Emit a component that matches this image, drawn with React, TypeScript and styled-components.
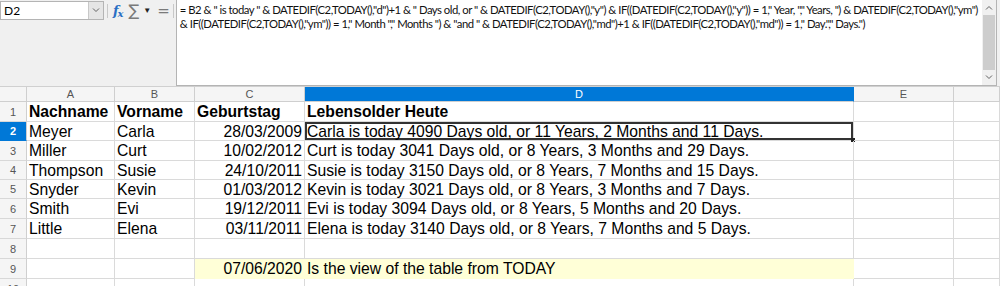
import styled, { createGlobalStyle } from "styled-components"

const GlobalStyle = createGlobalStyle`
  html, body {
    margin: 0;
    padding: 0;
    background: #ffffff;
  }
  body {
    font-family: "Liberation Sans", Arial, sans-serif;
  }
`

type Row = {
  num: number
  cells: string[]
  bold?: boolean
  highlight?: boolean
}

const rows: Row[] = [
  { num: 1, cells: ["Nachname", "Vorname", "Geburtstag", "Lebensolder Heute"], bold: true },
  { num: 2, cells: ["Meyer", "Carla", "28/03/2009", "Carla is today 4090 Days old, or 11 Years, 2 Months and 11 Days."] },
  { num: 3, cells: ["Miller", "Curt", "10/02/2012", "Curt is today 3041 Days old, or 8 Years, 3 Months and 29 Days."] },
  { num: 4, cells: ["Thompson", "Susie", "24/10/2011", "Susie is today 3150 Days old, or 8 Years, 7 Months and 15 Days."] },
  { num: 5, cells: ["Snyder", "Kevin", "01/03/2012", "Kevin is today 3021 Days old, or 8 Years, 3 Months and 7 Days."] },
  { num: 6, cells: ["Smith", "Evi", "19/12/2011", "Evi is today 3094 Days old, or 8 Years, 5 Months and 20 Days."] },
  { num: 7, cells: ["Little", "Elena", "03/11/2011", "Elena is today 3140 Days old, or 8 Years, 7 Months and 5 Days."] },
  { num: 8, cells: ["", "", "", ""] },
  { num: 9, cells: ["", "", "07/06/2020", "Is the view of the table from TODAY"], highlight: true },
  { num: 10, cells: ["", "", "", ""] },
]

const rowHeights = "15px 20px 19px 20px 19px 19px 20px 20px 20px 20px 20px"
const columns = ["A", "B", "C", "D", "E", ""]

const formulaLines = [
  '= B2 & " is today " & DATEDIF(C2,TODAY(),"d")+1 & " Days old, or " & DATEDIF(C2,TODAY(),"y") & IF((DATEDIF(C2,TODAY(),"y")) = 1," Year, "," Years, ") & DATEDIF(C2,TODAY(),"ym")',
  '& IF((DATEDIF(C2,TODAY(),"ym")) = 1," Month "," Months ") & "and " & DATEDIF(C2,TODAY(),"md")+1 & IF((DATEDIF(C2,TODAY(),"md")) = 1," Day."," Days.")',
]

const Page = styled.div`
  width: 1000px;
  height: 286px;
  overflow: hidden;
  background: #ffffff;
`

const FormulaBar = styled.div`
  display: flex;
  align-items: flex-start;
  height: 86px;
  background: #f0f0f0;
  border-bottom: 1px solid #d0d0d0;
`

const NameBox = styled.div`
  flex: 0 0 104px;
  display: flex;
  margin-top: 1px;
  height: 19px;
  border: 1px solid #b4b4b4;
  box-sizing: border-box;
  background: #ffffff;
`

const NameInput = styled.div`
  flex: 1;
  padding-left: 3px;
  font-family: "Lato", "Noto Sans", sans-serif;
  font-size: 12px;
  line-height: 17px;
  color: #000;
`

const DropButton = styled.div`
  width: 14px;
  display: grid;
  place-items: center;
  background: #e5e5e5;
  border-left: 1px solid #c8c8c8;
`

const Separator = styled.div<{ $gapRight?: number }>`
  flex: 0 0 1px;
  height: 14px;
  margin: 4px ${({ $gapRight }) => $gapRight ?? 3}px 0 3px;
  background: #c8c8c8;
`

const Tools = styled.div`
  flex: 0 0 54px;
  display: flex;
  align-items: center;
  gap: 6px;
  height: 21px;
  padding-left: 2px;
  box-sizing: border-box;
`

const FxIcon = styled.span`
  font-family: "DejaVu Serif", "Liberation Serif", serif;
  font-style: italic;
  font-weight: bold;
  font-size: 13px;
  color: #2a6fc4;
  letter-spacing: -1px;
`

const SmallSub = styled.span`
  font-size: 10px;
  position: relative;
  top: 2px;
`

const SumIcon = styled.span`
  font-family: "DejaVu Sans", sans-serif;
  font-size: 16px;
  color: #7a7a7a;
`

const TinyArrow = styled.span`
  font-size: 8px;
  color: #222;
  margin-left: -2px;
`

const EqualIcon = styled.span`
  font-family: "DejaVu Sans", sans-serif;
  font-size: 15px;
  color: #7a7a7a;
`

const FormulaBox = styled.div`
  flex: 1;
  min-width: 0;
  display: flex;
  height: 86px;
  margin-right: 3px;
  border: 1px solid #b4b4b4;
  border-top: none;
  box-sizing: border-box;
  background: #ffffff;
`

const FormulaText = styled.div`
  flex: 1;
  min-width: 0;
  padding: 3px 0 0 3px;
  font-family: "Lato", "Noto Sans", sans-serif;
  font-size: 11.3px;
  letter-spacing: -0.5px;
  line-height: 14px;
  color: #111;
  white-space: pre;
  overflow: hidden;
`

const ScrollBar = styled.div`
  flex: 0 0 14px;
  display: flex;
  flex-direction: column;
  align-items: stretch;
  background: #f0f0f0;
`

const ScrollArrow = styled.div`
  height: 15px;
  display: grid;
  place-items: center;
`

const ScrollThumb = styled.div`
  flex: 1;
  margin: 0 1px;
  background: #cdcdcd;
`

const Sheet = styled.div`
  display: grid;
  grid-template-columns: 27px 88px 80px 110px 549px 100px 46px;
  grid-template-rows: ${rowHeights};
`

const ColHeader = styled.div<{ $active?: boolean }>`
  box-sizing: border-box;
  display: grid;
  place-items: center;
  font-size: 11px;
  color: ${({ $active }) => ($active ? "#ffffff" : "#555555")};
  background: ${({ $active }) => ($active ? "#0078d7" : "#f5f5f5")};
  border-right: 1px solid ${({ $active }) => ($active ? "#0078d7" : "#cfcfcf")};
  border-bottom: 1px solid #cfcfcf;
`

const RowHeader = styled.div<{ $active?: boolean }>`
  box-sizing: border-box;
  display: grid;
  place-items: center;
  font-size: 11px;
  font-weight: ${({ $active }) => ($active ? "bold" : "normal")};
  color: ${({ $active }) => ($active ? "#ffffff" : "#555555")};
  background: ${({ $active }) => ($active ? "#0078d7" : "#f5f5f5")};
  border-right: 1px solid #cfcfcf;
  border-bottom: 1px solid ${({ $active }) => ($active ? "#0078d7" : "#d8d8d8")};
`

const Cell = styled.div<{ $align?: "left" | "right"; $bold?: boolean; $fill?: boolean; $selected?: boolean }>`
  position: relative;
  box-sizing: border-box;
  padding: 0 2px;
  font-family: "Liberation Sans", Arial, sans-serif;
  font-size: 15.7px;
  font-weight: ${({ $bold }) => ($bold ? "bold" : "normal")};
  line-height: 19px;
  text-align: ${({ $align }) => $align ?? "left"};
  color: #000000;
  white-space: nowrap;
  background: ${({ $fill }) => ($fill ? "#ffffd7" : "transparent")};
  border-right: 1px solid ${({ $fill }) => ($fill ? "#ffffd7" : "#dadada")};
  border-bottom: 1px solid ${({ $fill }) => ($fill ? "#ffffd7" : "#dadada")};
  box-shadow: ${({ $selected }) => ($selected ? "inset 0 0 0 2px #333333" : "none")};

  &::after {
    content: "";
    display: ${({ $selected }) => ($selected ? "block" : "none")};
    position: absolute;
    right: -2px;
    bottom: -2px;
    width: 4px;
    height: 4px;
    background: #222;
  }
`

const Chevron = ({ up }: { up?: boolean }) => (
  <svg width="8" height="5" viewBox="0 0 8 5">
    <path
      d={up ? "M1 4.5 L4 1.5 L7 4.5" : "M1 0.5 L4 3.5 L7 0.5"}
      fill="none"
      stroke="#606060"
      strokeWidth="1"
    />
  </svg>
)

export default function App() {
  return (
    <Page>
      <GlobalStyle />
      <FormulaBar>
        <NameBox>
          <NameInput>D2</NameInput>
          <DropButton>
            <Chevron />
          </DropButton>
        </NameBox>
        <Separator />
        <Tools>
          <FxIcon>
            f<SmallSub>x</SmallSub>
          </FxIcon>
          <SumIcon>∑</SumIcon>
          <TinyArrow>▼</TinyArrow>
          <EqualIcon>=</EqualIcon>
        </Tools>
        <Separator $gapRight={2} />
        <FormulaBox>
          <FormulaText>{formulaLines.join("\n")}</FormulaText>
          <ScrollBar>
            <ScrollArrow>
              <Chevron up />
            </ScrollArrow>
            <ScrollThumb />
            <ScrollArrow>
              <Chevron />
            </ScrollArrow>
          </ScrollBar>
        </FormulaBox>
      </FormulaBar>

      <Sheet>
        <ColHeader />
        {columns.map((c) => (
          <ColHeader key={c || "F"} $active={c === "D"}>
            {c}
          </ColHeader>
        ))}

        {rows.map((row) => (
          <>
            <RowHeader key={`h${row.num}`} $active={row.num === 2}>
              {row.num}
            </RowHeader>
            {row.cells.map((text, i) => (
              <Cell
                key={`${row.num}-${i}`}
                $bold={row.bold}
                $align={i === 2 && row.num > 1 ? "right" : "left"}
                $fill={row.highlight && i >= 2}
                $selected={row.num === 2 && i === 3}
              >
                {text}
              </Cell>
            ))}
            <Cell key={`${row.num}-e`} />
            <Cell key={`${row.num}-f`} />
          </>
        ))}
      </Sheet>
    </Page>
  )
}
